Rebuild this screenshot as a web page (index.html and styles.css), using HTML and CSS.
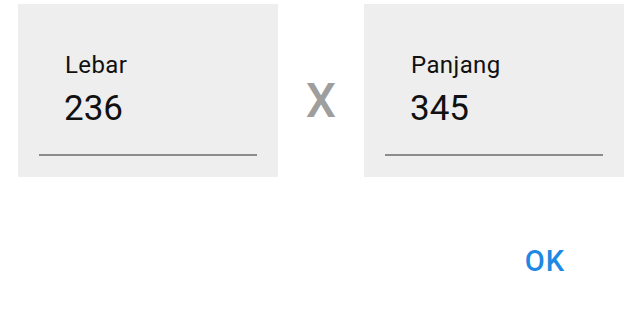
FILE: index.html
```html
<!DOCTYPE html>
<html>
<head>
<meta charset="utf-8">
<link rel="stylesheet" href="styles.css">
</head>
<body>
<div class="dialog">
  <div class="fields">
    <div class="field">
      <div class="label">Lebar</div>
      <div class="value">236</div>
      <div class="line"></div>
    </div>
    <div class="times">X</div>
    <div class="field">
      <div class="label">Panjang</div>
      <div class="value">345</div>
      <div class="line"></div>
    </div>
  </div>
  <div class="actions">
    <div class="ok">OK</div>
  </div>
</div>
</body>
</html>
```
FILE: styles.css
```css
html, body {
  margin: 0;
  padding: 0;
  background: #ffffff;
  font-family: Roboto, "Noto Sans", sans-serif;
}
.dialog {
  width: 640px;
  height: 327px;
  padding: 4px 16px 0 18px;
  box-sizing: border-box;
}
.fields {
  display: flex;
  align-items: flex-start;
}
.field {
  width: 260px;
  height: 173px;
  box-sizing: border-box;
  background: #eeeeee;
  padding: 47px 21px 0;
  display: flex;
  flex-direction: column;
}
.label {
  font-size: 24px;
  line-height: 29px;
  letter-spacing: 0.4px;
  color: #111111;
  padding-left: 26px;
}
.value {
  font-size: 35px;
  line-height: 41px;
  color: #111111;
  margin-top: 8px;
  padding-left: 25px;
}
.line {
  height: 2px;
  background: #8c8c8c;
  margin-top: auto;
  margin-bottom: 21px;
}
.times {
  width: 86px;
  text-align: center;
  font-size: 48px;
  line-height: 56px;
  font-weight: 500;
  margin-top: 69px;
  color: #9e9e9e;
}
.actions {
  display: flex;
  justify-content: flex-end;
  margin-top: 68px;
  padding-right: 59px;
}
.ok {
  font-size: 29px;
  line-height: 32px;
  font-weight: 500;
  color: #1e88e5;
  letter-spacing: 1px;
}
```
